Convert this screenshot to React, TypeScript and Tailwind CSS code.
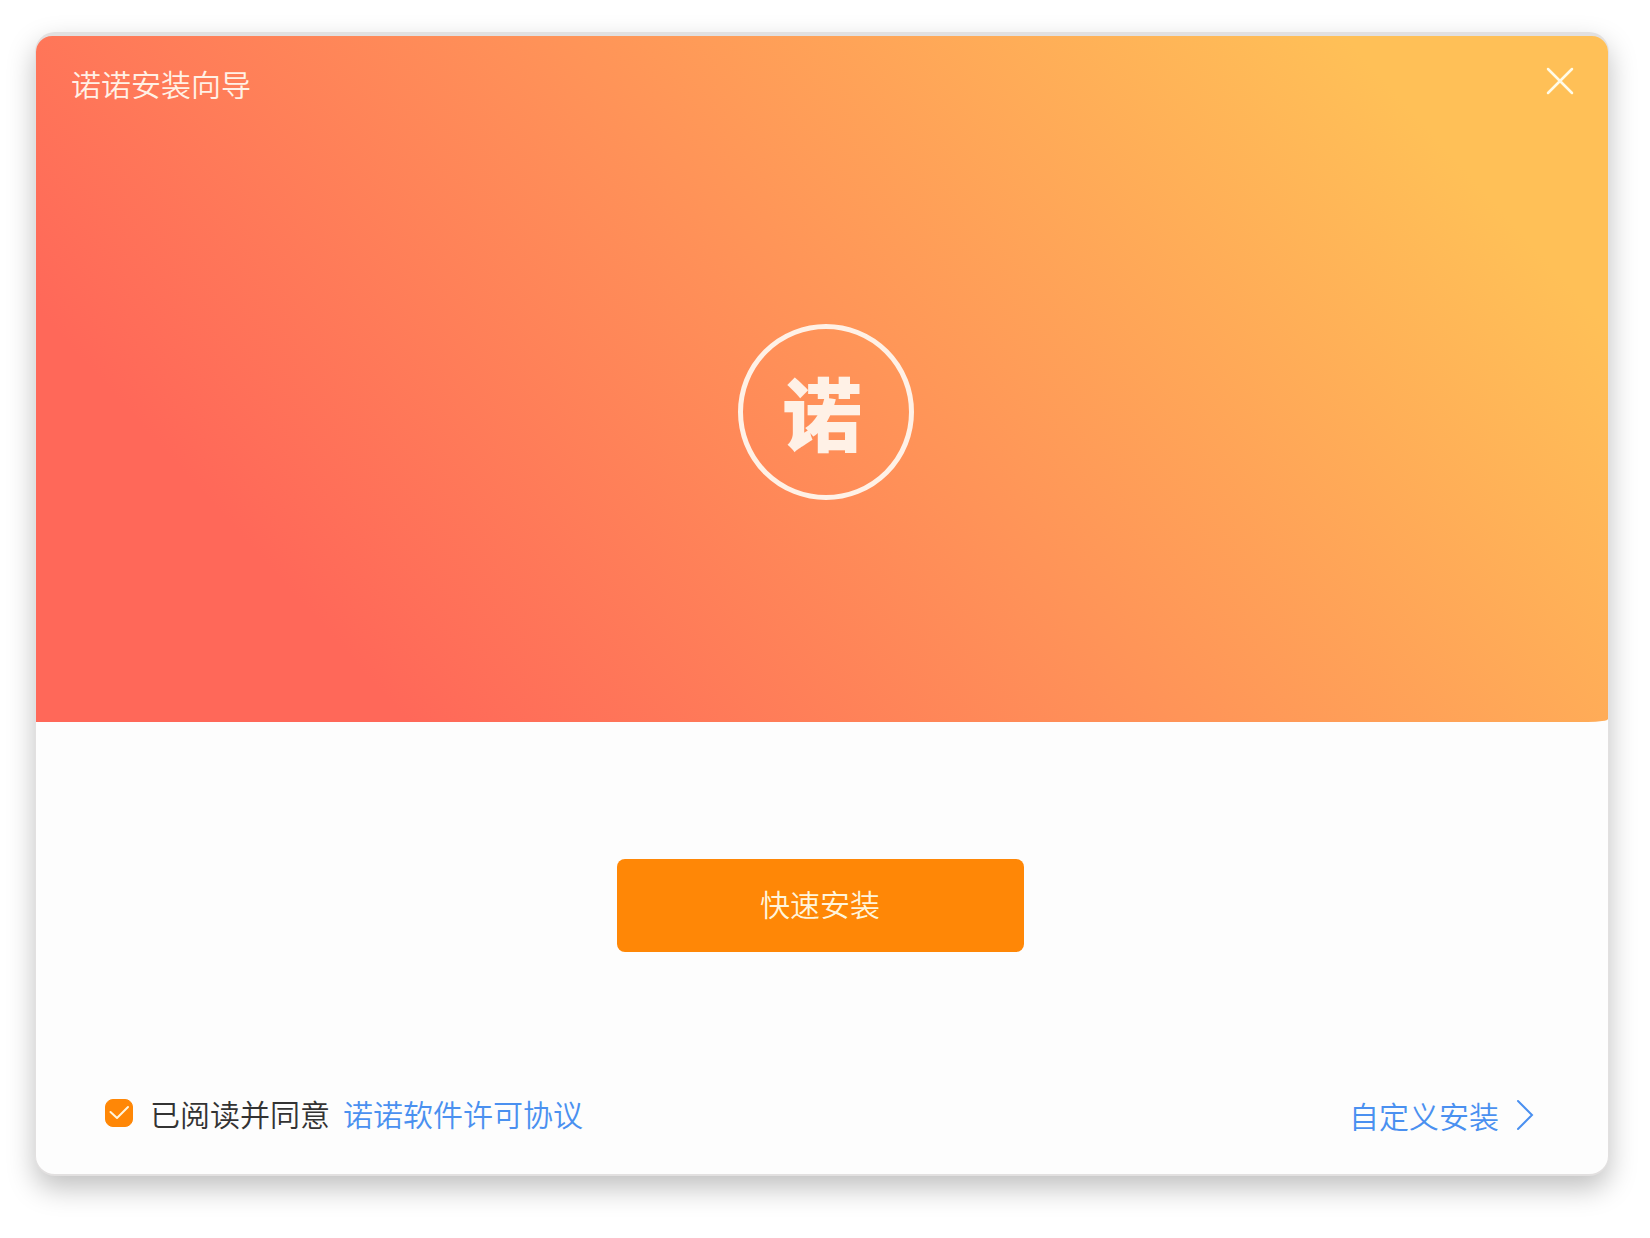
import { useState } from 'react'

// Round brand mark shown in the middle of the banner
const Logo = () => (
  <svg className="w-44 h-44" viewBox="0 0 176 176" role="img" aria-label="诺诺">
    <circle cx="88" cy="88" r="85.5" fill="none" stroke="#fff1e6" strokeWidth="5" />
    <text
      x="84"
      y="121"
      textAnchor="middle"
      fill="#fff1e6"
      className="text-[80px] font-black font-['Noto_Sans_CJK_SC',sans-serif]"
    >
      诺
    </text>
  </svg>
)

const Banner = () => (
  <header className="flex flex-1 flex-col rounded-t-2xl rounded-br-[20px_3px] bg-[linear-gradient(48deg,#ff6859_17%,#ffc057_88%)]">
    <div className="flex items-start justify-between pt-[25px] pl-[35px] pr-8">
      <h1 className="text-[30px] leading-11 font-[350] text-[#fff1e6]">诺诺安装向导</h1>
      <button type="button" aria-label="关闭" className="mt-1 cursor-pointer">
        <svg className="w-8 h-8" viewBox="0 0 32 32" fill="none" stroke="#fffbe8" strokeWidth="2.5" strokeLinecap="round">
          <path d="M4 4 28 28M28 4 4 28" />
        </svg>
      </button>
    </div>

    <div className="flex flex-1 items-center justify-center pb-1 pl-2">
      <Logo />
    </div>
  </header>
)

export default function App() {
  const [agreed, setAgreed] = useState(true)

  return (
    <div className="flex min-h-screen flex-col bg-white pt-8 pr-[41px] pb-[62px] pl-[35px] font-['Noto_Sans_CJK_SC',sans-serif]">
      <main className="flex flex-1 flex-col rounded-[20px] border border-t-4 border-b-2 border-[#e2e0e0] bg-[#fdfdfd] shadow-[0_12px_28px_rgba(0,0,0,0.25)]">
        <Banner />

        {/* Install button */}
        <div className="flex justify-center pt-[137px] pr-1 pb-[132px]">
          <button
            type="button"
            className="h-[93px] w-[407px] cursor-pointer rounded-lg bg-[#ff8706] pb-1 text-[30px] font-[350] text-[#fff5dc]"
          >
            快速安装
          </button>
        </div>

        {/* Licence agreement and custom install */}
        <footer className="flex items-center justify-between pr-[73px] pb-8 pl-[69px] text-[30px] leading-[54px] font-[350]">
          <div className="flex items-center">
            <span className="relative flex h-7 w-7">
              <input
                id="agree"
                type="checkbox"
                checked={agreed}
                onChange={(e) => setAgreed(e.target.checked)}
                className="peer h-7 w-7 cursor-pointer appearance-none rounded-lg border border-[#ff8706] checked:bg-[#ff8706]"
              />
              <svg
                className="pointer-events-none absolute inset-0 hidden h-7 w-7 peer-checked:block"
                viewBox="0 0 28 28"
                fill="none"
                stroke="#fff5dc"
                strokeWidth="2"
                strokeLinecap="round"
                strokeLinejoin="round"
              >
                <path d="M5.5 13 12 19 23 8" />
              </svg>
            </span>
            <label htmlFor="agree" className="cursor-pointer pl-[17px] text-[#333333]">
              已阅读并同意
            </label>
            <a href="#license" className="pl-[13px] text-[#4a90f0]">诺诺软件许可协议</a>
          </div>

          <a href="#custom" className="flex items-center gap-4 pt-1 text-[#4a90f0]">
            自定义安装
            <svg className="h-8 w-5" viewBox="0 0 20 32" fill="none" stroke="currentColor" strokeWidth="2" strokeLinecap="round">
              <path d="M3 2 17 16 3 30" />
            </svg>
          </a>
        </footer>
      </main>
    </div>
  )
}
